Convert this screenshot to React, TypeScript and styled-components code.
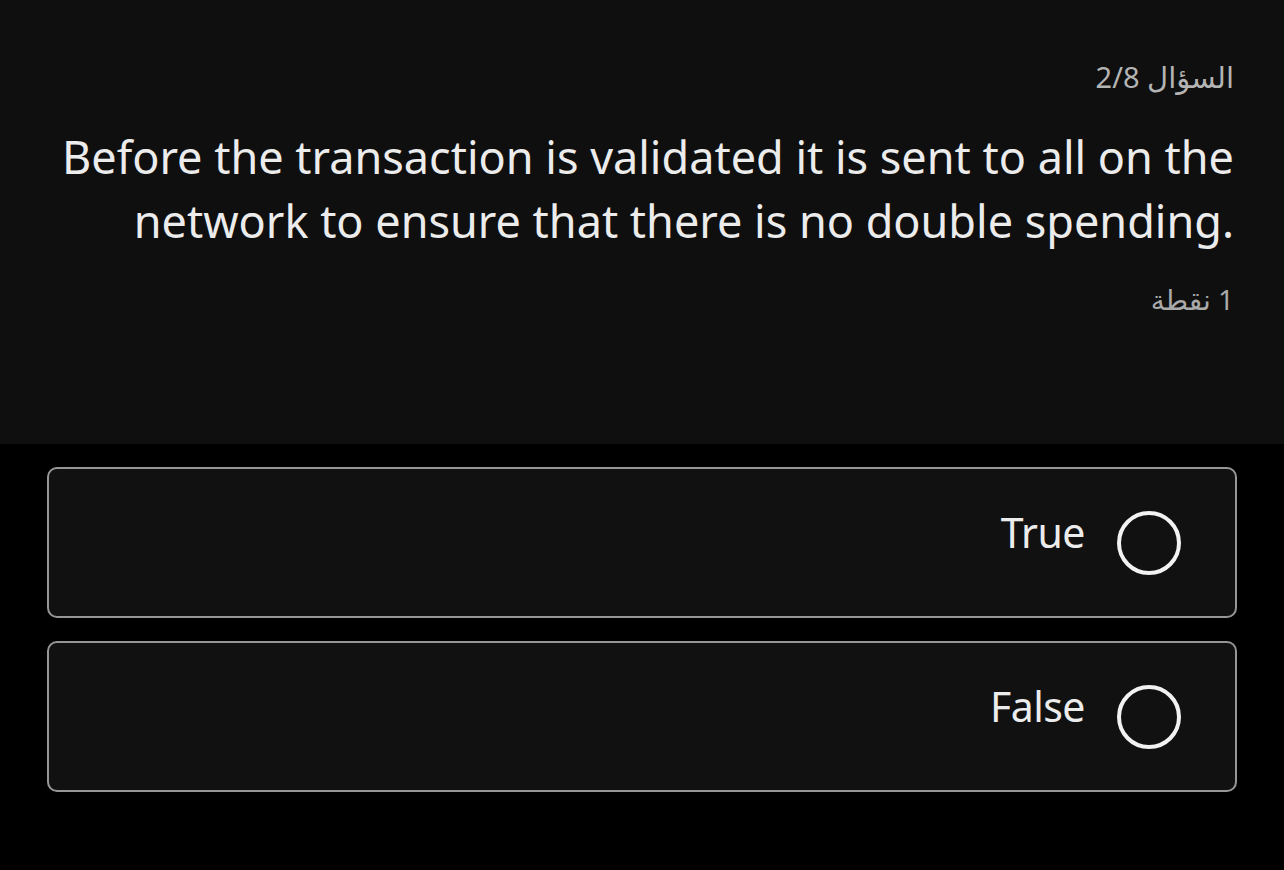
import styled, { createGlobalStyle } from "styled-components";

const GlobalStyle = createGlobalStyle`
  html, body {
    margin: 0;
    padding: 0;
    background: #000;
  }
  body {
    font-family: "Noto Sans", "DejaVu Sans", sans-serif;
    color: #ececec;
  }
`;

type Option = {
  id: string;
  label: string;
};

const options: Option[] = [
  { id: "true", label: "True" },
  { id: "false", label: "False" },
];

export default function App() {
  return (
    <Page dir="rtl">
      <GlobalStyle />
      <Header>
        <Counter>السؤال 2/8</Counter>
        <Question dir="ltr">
          Before the transaction is validated it is sent to all on the network
          to ensure that there is no double spending.
        </Question>
        <Points>1 نقطة</Points>
      </Header>
      <OptionList>
        {options.map((option) => {
          return (
            <OptionCard key={option.id}>
              <Radio />
              <OptionLabel>{option.label}</OptionLabel>
            </OptionCard>
          );
        })}
      </OptionList>
    </Page>
  );
}

const Page = styled.div`
  width: 100%;
  min-height: 870px;
  background: #000;
`;

const Header = styled.div`
  box-sizing: border-box;
  height: 444px;
  background: #0f0f0f;
  padding: 57px 50px 0 50px;
  display: flex;
  flex-direction: column;
  align-items: flex-start;
`;

const Counter = styled.div`
  font-size: 29px;
  line-height: 40px;
  color: #b4b4b4;
`;

const Question = styled.div`
  align-self: stretch;
  margin-top: 28px;
  padding-left: 8px;
  font-size: 45px;
  line-height: 64px;
  letter-spacing: 0;
  text-align: right;
  color: #ececec;
`;

const Points = styled.div`
  margin-top: 26px;
  font-size: 28px;
  line-height: 40px;
  color: #a9a9a9;
`;

const OptionList = styled.div`
  display: flex;
  flex-direction: column;
  gap: 23px;
  padding: 23px 47px;
`;

const OptionCard = styled.div`
  box-sizing: border-box;
  height: 151px;
  border: 2px solid #969696;
  border-radius: 10px;
  background: #111111;
  display: flex;
  align-items: center;
  gap: 32px;
  padding-right: 54px;
`;

const Radio = styled.span`
  box-sizing: border-box;
  width: 64px;
  height: 64px;
  border: 4px solid #f2f2f2;
  border-radius: 50%;
  flex-shrink: 0;
`;

const OptionLabel = styled.span`
  font-size: 41px;
  line-height: 50px;
  letter-spacing: -0.5px;
  color: #ececec;
  margin-top: -22px;
`;
